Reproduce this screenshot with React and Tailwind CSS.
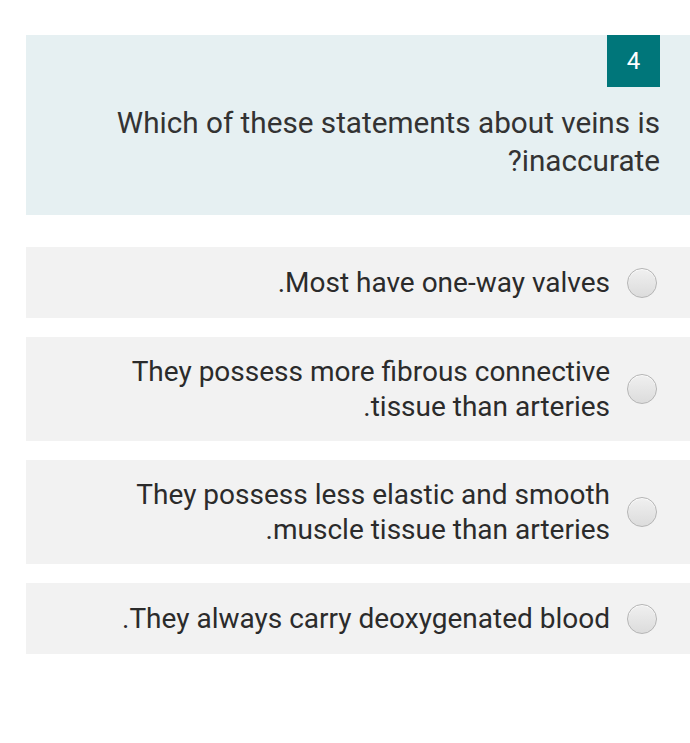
const OPTIONS = [
  'Most have one-way valves.',
  'They possess more fibrous connective tissue than arteries.',
  'They possess less elastic and smooth muscle tissue than arteries.',
  'They always carry deoxygenated blood.',
];

function Radio() {
  return (
    <span className="shrink-0 w-[30px] h-[30px] rounded-full border border-[#b5b5b5] bg-gradient-to-b from-[#f0f0f0] to-[#dcdcdc] shadow-[inset_0_1px_1px_rgba(255,255,255,0.8)]" />
  );
}

export default function App() {
  return (
    <div
      dir="rtl"
      className="w-[690px] h-[743px] bg-white pt-[35px] pl-[26px] text-[#333]"
      style={{ fontFamily: 'Roboto, "Liberation Sans", sans-serif' }}
    >
      <div className="bg-[#e6f0f2] pr-[30px] pb-[35px]">
        <div className="flex">
          <div className="w-[53px] h-[52px] bg-[#00767a] text-white text-[24px] flex items-center justify-center">
            4
          </div>
        </div>
        <p className="mt-[17px] pl-[20px] text-[29.7px] leading-[38px] text-[#333]">
          Which of these statements about veins is inaccurate?
        </p>
      </div>

      <div className="mt-[32px] flex flex-col gap-[19px]">
        {OPTIONS.map((text) => (
          <div key={text} className="bg-[#f2f2f2] min-h-[71px] flex items-center gap-[17px] pr-[33px] pl-[60px] py-[17px]">
            <Radio />
            <span className="text-[28px] leading-[35px] text-[#2b2b2b] max-w-[500px]">{text}</span>
          </div>
        ))}
      </div>
    </div>
  );
}
